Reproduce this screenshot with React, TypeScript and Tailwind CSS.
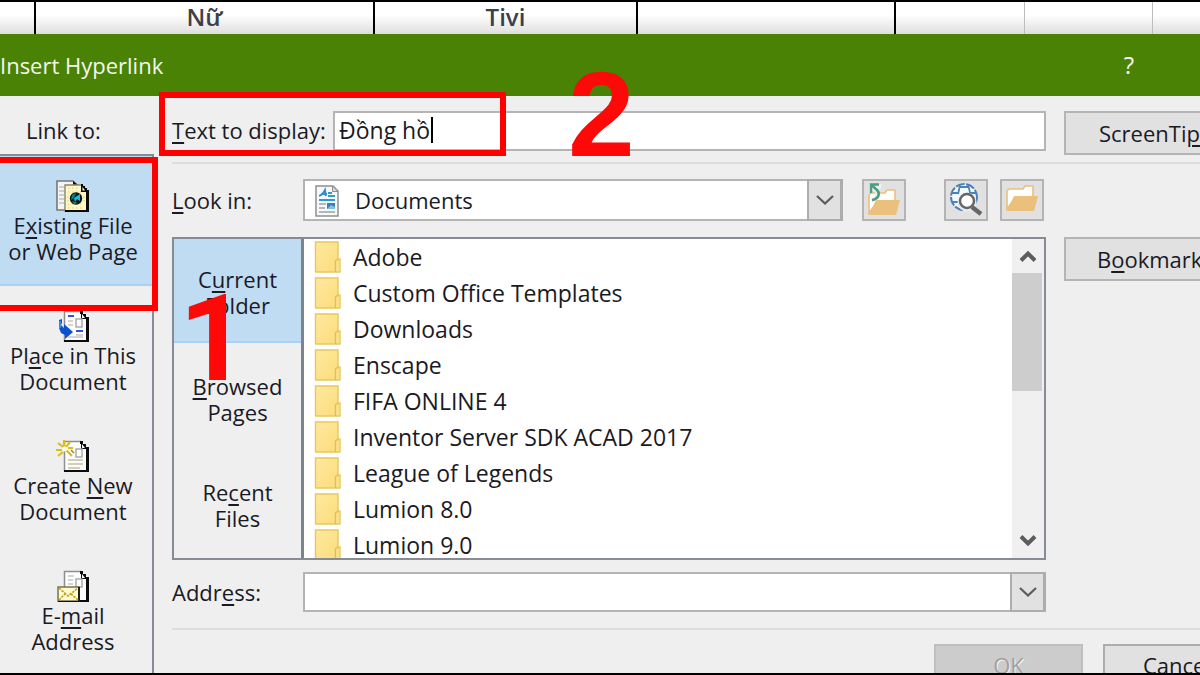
import React from 'react';

const Key = ({ children }: { children: string }) => (
  <span className="underline decoration-2 underline-offset-3">{children}</span>
);

const Page = () => (
  <g>
    <path d="M9 1H26L31 7V31H9Z" fill="#fdfdfd" />
    <path d="M8.5 31V1.5H25" fill="none" stroke="#8f8f8f" strokeWidth="1.5" />
    <path d="M24 1H27V4H30V7H33V32H8V30H30V9H25V4H24Z" fill="#0c0c0c" />
    <path d="M26 4L29 8H26Z" fill="#fff" />
  </g>
);

const WebPageIcon = () => (
  <svg width="34" height="32" viewBox="0 0 34 32" aria-hidden="true">
    <path d="M1 1H17L21 5V30H1Z" fill="#f4f4f4" stroke="#777" strokeWidth="1.6" />
    <path d="M17 1L22 5H17Z" fill="#111" />
    <path d="M3 7H8M3 11H8M3 15H8M3 19H8M3 23H8" stroke="#c2c2c2" strokeWidth="1.4" />
    <path d="M9 5H26L31 11V31H9Z" fill="#fff8c9" stroke="#8a8463" strokeWidth="1.4" />
    <path d="M12 8H24M12 12H25M12 24H28M12 28H28M12 16V24M28 16V24" stroke="#f1d583" strokeWidth="1.5" strokeDasharray="1.5 2.5" />
    <path d="M25 4H27V6H29V8H31V10H33V32H9V30H30V12H25Z" fill="#0c0c0c" />
    <path d="M26.500 7L29 10.500H26.500Z" fill="#fff" />
    <circle cx="20" cy="18.500" r="6.200" fill="#0a1a1c" />
    <path d="M16 15L20 13L18 18L15 20Z" fill="#0b7f86" />
    <path d="M18 18L24 14V21L21 19L19 22Z" fill="#21b7d8" />
    <path d="M16 21L19 22L22 23L18 24Z" fill="#1f8a5c" />
  </svg>
);

const PlaceIcon = () => (
  <svg width="34" height="32" viewBox="0 0 34 32" aria-hidden="true">
    <Page />
    <path d="M12 6H18M20 21H27" stroke="#2f55e0" strokeWidth="1.8" />
    <path d="M12 11H17M12 15H17M20 25H27M12 27H27" stroke="#c6c6c6" strokeWidth="1.5" />
    <rect x="20" y="9" width="6" height="8" fill="#fff" stroke="#a5a5a5" strokeWidth="1.4" />
    <path d="M3 10L6 9V13L5 15L8 18V14L17 22L9 29V25L5 23L3 18Z" fill="#0a50d0" />
    <path d="M4 11V18" stroke="#5c93ee" strokeWidth="1.5" />
  </svg>
);

const NewDocIcon = () => (
  <svg width="34" height="32" viewBox="0 0 34 32" aria-hidden="true">
    <Page />
    <path d="M12 20H27M12 24H27M12 28H24" stroke="#c9bda3" strokeWidth="1.5" />
    <rect x="20" y="9" width="6" height="8" fill="#fff" stroke="#a5a5a5" strokeWidth="1.4" />
    <path d="M2 3L7 7M8 0V7M14 2L10 7M0 10H6M2 16L7 12M10 10L16 16M12 8H17" stroke="#d8bd22" strokeWidth="2.200" />
    <circle cx="8.500" cy="9" r="2.500" fill="#fffbe0" />
    <path d="M15 10L18 13" stroke="#9b8730" strokeWidth="1.5" />
  </svg>
);

const MailIcon = () => (
  <svg width="34" height="32" viewBox="0 0 34 32" aria-hidden="true">
    <Page />
    <path d="M12 6H18M12 10H17M12 14H17" stroke="#c6c6c6" strokeWidth="1.5" />
    <rect x="20" y="9" width="6" height="8" fill="#fff" stroke="#a5a5a5" strokeWidth="1.4" />
    <rect x="2" y="17" width="21" height="14" fill="#fffad0" stroke="#76734f" strokeWidth="1.5" />
    <path d="M23 17V32H2" fill="none" stroke="#111" strokeWidth="1.8" />
    <path d="M3 18L12 26L22 18M3 30L9 24M22 30L15 24" fill="none" stroke="#b9a21a" strokeWidth="1.6" strokeDasharray="2.500 1" />
  </svg>
);

const FolderIcon = () => (
  <svg width="28" height="32" viewBox="0 0 28 32" aria-hidden="true">
    <defs>
      <linearGradient id="folder" x1="0" y1="0" x2="1" y2="1">
        <stop offset="0" stopColor="#ffe9a0" />
        <stop offset="1" stopColor="#fbdc79" />
      </linearGradient>
    </defs>
    <path d="M1.500 1H24V18H26V31H1.500Z" fill="url(#folder)" stroke="#e9c75c" strokeWidth="1.4" />
    <path d="M21.500 31V20L24 18" fill="none" stroke="#e3bd4d" strokeWidth="1.4" />
    <rect x="22.300" y="20" width="3" height="10" fill="#fbe08a" />
  </svg>
);

const DocumentIcon = () => (
  <svg width="24" height="32" viewBox="0 0 24 32" aria-hidden="true">
    <path d="M1 1H18L23 6V31H1Z" fill="#f7f8f9" stroke="#8c9094" strokeWidth="1.5" />
    <path d="M17.500 1V6.500H23Z" fill="#dcdfe1" stroke="#8c9094" />
    <path d="M4 11C7 10 9 7 10 5L11 11M7 9H12" fill="none" stroke="#2f8fd0" strokeWidth="1.8" />
    <path d="M13 8H17M13 11H20M4 15H20" stroke="#2f9ad8" strokeWidth="2" />
    <path d="M4 19H11M4 23H10M4 27H20" stroke="#9aa1a7" strokeWidth="1.3" />
    <rect x="12" y="18" width="8" height="6" fill="#3b7fb2" />
    <path d="M12 24L16 20L20 22V24Z" fill="#7fc2e6" />
  </svg>
);

const OpenFolder = () => (
  <g>
    <path d="M1 24V6L3 4H17L19 1H27V13H9Z" fill="#fff" stroke="#ebc07c" strokeWidth="1.6" />
    <path d="M8 11H32L28 26H1Z" fill="#ebc07c" />
  </g>
);

const UpIcon = () => (
  <svg width="34" height="36" viewBox="0 0 34 36" aria-hidden="true">
    <g transform="translate(1 7)"><OpenFolder /></g>
    <path d="M2 2H15L13 8H12C15 13 13 18 5 20L4 17C9 15 10 13 6 8L2 12Z" fill="#efefef" />
    <path d="M4 11V2.500H12M4 2.500L10 8C14 12 11 17 5 18" fill="none" stroke="#4c9e83" strokeWidth="2.500" />
  </svg>
);

const SearchWebIcon = () => (
  <svg width="34" height="36" viewBox="0 0 34 36" aria-hidden="true">
    <circle cx="15" cy="15" r="13" fill="#f5f8fc" stroke="#4d7fb8" strokeWidth="2" strokeDasharray="9 1.500" />
    <path d="M3 11H10M20 11H27M3 20H9M11 3C10 7 10 9 9 12M19 3C20 6 21 9 21 12M10 5H20" fill="none" stroke="#4d7fb8" strokeWidth="1.800" />
    <circle cx="18" cy="20" r="9.500" fill="#e9edf2" />
    <path d="M23 25L32 32" stroke="#666" strokeWidth="4.500" />
    <circle cx="18" cy="19" r="7" fill="#fff" stroke="#666" strokeWidth="2.500" />
  </svg>
);

const BrowseIcon = () => (
  <svg width="34" height="36" viewBox="0 0 34 36" aria-hidden="true">
    <g transform="translate(1 3)"><OpenFolder /></g>
  </svg>
);

const Chevron = ({ up = false, bold = false }: { up?: boolean; bold?: boolean }) => (
  <svg width="18" height="12" viewBox="0 0 18 12" aria-hidden="true">
    <path
      d={bold ? (up ? 'M2 10.500L9 3.500L16 10.500' : 'M2 1.500L9 8.500L16 1.500') : 'M1 2L9 9.500L17 2'}
      fill="none"
      stroke="#5c5c5c"
      strokeWidth={bold ? 4 : 2.200}
    />
  </svg>
);

const links = [
  { icon: <WebPageIcon />, first: <>E<Key>x</Key>isting File</>, second: 'or Web Page' },
  { icon: <PlaceIcon />, first: <>Pl<Key>a</Key>ce in This</>, second: 'Document' },
  { icon: <NewDocIcon />, first: <>Create <Key>N</Key>ew</>, second: 'Document' },
  { icon: <MailIcon />, first: <>E-<Key>m</Key>ail</>, second: 'Address' },
];

const views = [
  { first: <>C<Key>u</Key>rrent</>, second: 'Folder' },
  { first: <><Key>B</Key>rowsed</>, second: 'Pages' },
  { first: <>Re<Key>c</Key>ent</>, second: 'Files' },
];

const folders = [
  'Adobe', 'Custom Office Templates', 'Downloads', 'Enscape', 'FIFA ONLINE 4',
  'Inventor Server SDK ACAD 2017', 'League of Legends', 'Lumion 8.0', 'Lumion 9.0',
];

const toolButton = 'flex h-[42px] w-11 items-center justify-center border-2 border-[#b4b4b4] bg-[#e1e1e1]';

export default function App() {
  return (
    <div className="relative flex h-screen flex-col overflow-hidden border-y-2 border-black bg-[#efefef] font-['Open_Sans','Noto_Sans',sans-serif] text-[22px] leading-[26px] text-[#1a1a24]">
      <table className="h-8 w-full shrink-0 table-fixed border-collapse bg-linear-to-b from-white from-40% to-[#dedede] text-2xl leading-7 font-semibold text-[#3c4048]">
        <tbody>
          <tr>
            <td className="w-[35px] border-r-2 border-black p-0" />
            <td className="w-[339px] border-r-2 border-black p-0 pb-0.5 text-center">Nữ</td>
            <td className="w-[263px] border-r-2 border-black p-0 pb-0.5 text-center">Tivi</td>
            <td className="w-[258px] border-r-2 border-black p-0" />
            <td className="w-[129px] border-r border-[#bdbdbd] p-0" />
            <td className="w-[128px] border-r border-[#bdbdbd] p-0" />
            <td className="p-0" />
          </tr>
        </tbody>
      </table>

      <header className="flex h-[62px] shrink-0 items-center justify-between bg-[#498205] pr-[66px] text-[#f4f8ee]">
        <h1>Insert Hyperlink</h1>
        <button type="button" aria-label="Help" className="text-2xl">?</button>
      </header>

      <div className="flex min-h-0 flex-1">
        <nav className="flex w-[154px] shrink-0 flex-col">
          <h2 className="h-[58px] shrink-0 pt-[21px] pl-[26px]">Link to:</h2>
          <ul className="flex flex-1 flex-col border-t-2 border-r-2 border-[#868b96]">
            {links.map((item, i) => (
              <li key={i}>
                <button
                  type="button"
                  className={`flex h-[130px] w-full flex-col items-center pt-6 pr-1.5 ${i === 0 ? 'border-b-2 border-[#a9d1f3] bg-[#c0dcf3]' : ''}`}
                >
                  {item.icon}
                  <span className="whitespace-nowrap">{item.first}<br />{item.second}</span>
                </button>
              </li>
            ))}
          </ul>
        </nav>

        <main className="flex min-w-0 flex-1 flex-col pl-[18px]">
          <div className="flex h-[68px] shrink-0 items-start border-b-2 border-[#dcdcdc] pt-[15px]">
            <label htmlFor="display" className="w-[161px] shrink-0 pt-1.5 whitespace-nowrap"><Key>T</Key>ext to display:</label>
            <div className="relative flex-1">
              <input id="display" defaultValue="Đồng hồ" className="block h-10 w-full border-2 border-[#b4b4b4] bg-white px-1 pb-0.5 text-[23px] outline-none" />
              <span className="absolute top-1.5 left-[98px] h-[26px] w-0.5 bg-black" />
            </div>
            <div className="ml-[18px] w-[136px] overflow-hidden">
              <button type="button" className="h-11 w-[190px] border-2 border-[#b4b4b4] bg-[#e1e1e1] pl-[33px] text-left">ScreenTi<Key>p</Key>...</button>
            </div>
          </div>

          <div className="flex flex-1 items-start">
            <div className="flex flex-1 flex-col pt-[15px]">
              <div className="flex">
                <label htmlFor="look" className="w-[131px] pt-2"><Key>L</Key>ook in:</label>
                <div className="relative w-[540px]">
                  <select id="look" className="block h-[42px] w-full appearance-none border-2 border-[#b4b4b4] bg-white pl-[50px] outline-none">
                    <option>Documents</option>
                  </select>
                  <span className="pointer-events-none absolute top-1.5 left-3"><DocumentIcon /></span>
                  <span className="pointer-events-none absolute inset-y-0 right-0 flex w-9 items-center justify-center border-2 border-r-3 border-[#adadad] bg-[#e1e1e1]"><Chevron /></span>
                </div>
                <button type="button" aria-label="Up one folder" className={`${toolButton} ml-[19px]`}><UpIcon /></button>
                <button type="button" aria-label="Browse the web" className={`${toolButton} ml-auto`}><SearchWebIcon /></button>
                <button type="button" aria-label="Browse for file" className={`${toolButton} mr-0.5 ml-3`}><BrowseIcon /></button>
              </div>

              <div className="mt-4 flex h-[323px] border-2 border-[#868b96]">
                <ul className="w-[130px] shrink-0 border-r-3 border-[#7b838e]">
                  {views.map((v, i) => (
                    <li key={i} className="mb-0.5">
                      <button type="button" className={`h-[104px] w-full pt-1 text-center ${i === 0 ? 'border-b-2 border-[#a9d1f3] bg-[#c0dcf3]' : ''}`}>
                        {v.first}<br />{v.second}
                      </button>
                    </li>
                  ))}
                </ul>
                <ul className="flex-1 overflow-hidden bg-white text-[23px]">
                  {folders.map((name) => (
                    <li key={name} className="flex h-9 items-center gap-[11px] pl-2.5 whitespace-nowrap"><FolderIcon />{name}</li>
                  ))}
                </ul>
                <div className="flex w-8 shrink-0 flex-col bg-[#f0f0f0]">
                  <button type="button" aria-label="Scroll up" className="flex h-[34px] items-center justify-center"><Chevron up bold /></button>
                  <div className="mr-0.5 h-[118px] bg-[#cdcdcd]" />
                  <button type="button" aria-label="Scroll down" className="mt-auto flex h-[34px] items-center justify-center"><Chevron bold /></button>
                </div>
              </div>

              <div className="mt-3 flex">
                <label htmlFor="address" className="w-[131px] pt-[7px]">Addr<Key>e</Key>ss:</label>
                <input id="address" className="h-10 min-w-0 flex-1 border-2 border-r-0 border-[#b4b4b4] bg-white px-2 outline-none" />
                <button type="button" aria-label="Show addresses" className="flex h-10 w-9 items-center justify-center border-2 border-r-3 border-[#adadad] bg-[#e1e1e1]"><Chevron /></button>
              </div>
            </div>
            <div className="ml-[18px] w-[136px] overflow-hidden pt-[73px]">
              <button type="button" className="h-11 w-[190px] border-2 border-[#b4b4b4] bg-[#e1e1e1] pl-[31px] text-left">B<Key>o</Key>okmark...</button>
            </div>
          </div>

          <footer className="flex h-[45px] shrink-0 justify-end gap-5 overflow-hidden border-t-2 border-[#dcdcdc] pt-3.5">
            <button type="button" disabled className="h-[42px] w-[149px] shrink-0 border-2 border-[#bfbfbf] bg-[#cccccc] text-[#a0a0a0] text-shadow-[1px_1px_0_#f4f4f4]">OK</button>
            <button type="button" className="h-[42px] w-[97px] shrink-0 overflow-hidden border-2 border-r-0 border-[#adadad] bg-[#e1e1e1] pl-[38px] text-left">Cancel</button>
          </footer>
        </main>
      </div>

      <div className="pointer-events-none absolute top-[90px] left-[159px] h-16 w-[347px] border-6 border-[#fe0000]" />
      <div className="pointer-events-none absolute top-[155px] left-0 h-[154px] w-[158px] border-6 border-l-0 border-[#fe0000]" />
      <span className="pointer-events-none absolute top-[52px] left-[568px] font-['Liberation_Sans',sans-serif] text-[120px] leading-[120px] font-bold text-[#fe0808]">2</span>
      <span className="pointer-events-none absolute top-[277px] left-[179px] font-['Roboto',sans-serif] text-[120px] leading-[120px] font-bold text-[#fe0808]">1</span>
    </div>
  );
}
